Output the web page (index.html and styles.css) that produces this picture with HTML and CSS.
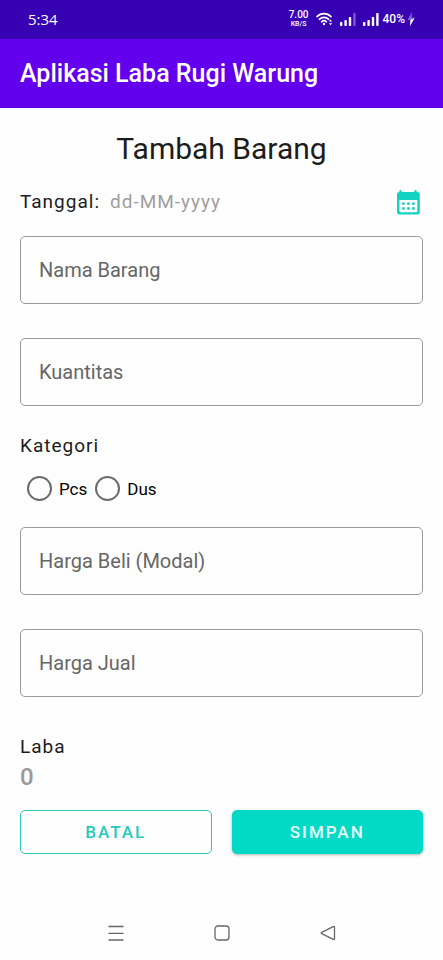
FILE: index.html
```html
<!DOCTYPE html>
<html lang="id">
<head>
<meta charset="utf-8">
<meta name="viewport" content="width=device-width, initial-scale=1">
<title>Aplikasi Laba Rugi Warung</title>
<link rel="stylesheet" href="styles.css">
</head>
<body>
<div class="status-bar">
  <span class="clock">5:34</span>
  <div class="status-icons">
    <div class="net-speed"><span class="net-value">7.00</span><span class="net-unit">KB/S</span></div>
    <svg width="17" height="14" viewBox="0 0 17 14" fill="none" stroke="#fff" stroke-width="1.6" stroke-linecap="round" aria-hidden="true">
      <path d="M1 4.6C5 .6 11 .6 15 4.6M3.3 7.3c2.7-2.6 6.7-2.6 9.4 0M5.6 9.8c1.4-1.3 3.4-1.3 4.8 0"/>
      <circle cx="8" cy="12" r="1.2" fill="#fff" stroke="none"/>
      <path d="M12.8 9.6l1.7-2 1.7 2zM12.8 11.2h3.4l-1.7 2z" fill="#fff" stroke="none"/>
    </svg>
    <svg width="16" height="13" viewBox="0 0 16 13" fill="#fff" aria-hidden="true">
      <rect x="0" y="9" width="2.4" height="4" rx=".8"/><rect x="4.4" y="7" width="2.4" height="6" rx=".8"/><rect x="8.8" y="4" width="2.4" height="9" rx=".8"/><rect x="13.2" y="0" width="2.4" height="13" rx=".8" opacity=".35"/>
    </svg>
    <svg width="16" height="13" viewBox="0 0 16 13" fill="#fff" aria-hidden="true">
      <rect x="0" y="9" width="2.4" height="4" rx=".8"/><rect x="4.4" y="7" width="2.4" height="6" rx=".8"/><rect x="8.8" y="4" width="2.4" height="9" rx=".8"/><rect x="13.2" y="0" width="2.4" height="13" rx=".8"/>
    </svg>
    <div class="battery">
      <span>40%</span>
      <svg width="8" height="14" viewBox="0 0 8 14" aria-hidden="true">
        <path d="M5 0L.5 8H3.5L3 14 7.5 5.6H4.5z" fill="#fff" opacity=".4"/>
        <path d="M3.500 8L3 14 7.500 6.200z" fill="#fff"/>
      </svg>
    </div>
  </div>
</div>
<header class="app-bar"><h1>Aplikasi Laba Rugi Warung</h1></header>
<main>
  <form class="item-form">
    <h2>Tambah Barang</h2>
    <div class="date-row">
      <label class="label" for="tanggal">Tanggal:</label>
      <input class="date-input" id="tanggal" type="text" placeholder="dd-MM-yyyy">
      <button class="calendar-button" type="button" aria-label="Pilih tanggal">
        <svg width="30" height="30" viewBox="0 0 30 30" aria-hidden="true">
          <path fill="#12d3c2" fill-rule="evenodd" d="M7.5 3a1.2 1.2 0 0 1 1.2 1.2V5h12.600v-.8a1.200 1.200 0 0 1 2.400 0V5h.8a2.300 2.300 0 0 1 2.300 2.300v18a2.300 2.300 0 0 1-2.300 2.300h-18.200A2.300 2.300 0 0 1 4 25.300v-18A2.300 2.300 0 0 1 6.300 5V4.200A1.200 1.200 0 0 1 7.500 3zM6.500 13v11.200a1 1 0 0 0 1 1h15.800a1 1 0 0 0 1-1V13z"/>
          <g fill="#12d3c2"><circle cx="10.400" cy="16.700" r="1.400"/><circle cx="15.400" cy="16.700" r="1.400"/><circle cx="20.400" cy="16.700" r="1.400"/><circle cx="10.400" cy="21.500" r="1.400"/><circle cx="15.400" cy="21.500" r="1.400"/><circle cx="20.400" cy="21.500" r="1.400"/></g>
        </svg>
      </button>
    </div>
    <div class="fields">
      <input class="field" type="text" placeholder="Nama Barang" aria-label="Nama Barang">
      <input class="field" type="text" inputmode="numeric" placeholder="Kuantitas" aria-label="Kuantitas">
    </div>
    <fieldset class="category">
      <legend class="label">Kategori</legend>
      <div class="options">
        <label class="option"><input type="radio" name="kategori" value="pcs">Pcs</label>
        <label class="option"><input type="radio" name="kategori" value="dus">Dus</label>
      </div>
    </fieldset>
    <div class="fields">
      <input class="field" type="text" inputmode="numeric" placeholder="Harga Beli (Modal)" aria-label="Harga Beli (Modal)">
      <input class="field" type="text" inputmode="numeric" placeholder="Harga Jual" aria-label="Harga Jual">
    </div>
    <div class="profit">
      <span class="label">Laba</span>
      <output class="profit-value">0</output>
    </div>
    <div class="actions">
      <button class="button outlined" type="button">BATAL</button>
      <button class="button filled" type="submit">SIMPAN</button>
    </div>
  </form>
</main>
<nav class="system-nav" aria-label="Navigasi sistem">
  <button type="button" aria-label="Menu"><svg width="18" height="18" viewBox="0 0 18 18" fill="none" stroke="#666" stroke-width="1.300" aria-hidden="true"><path d="M1.500 2.500h15M1.500 9.300h15M1.500 16h15"/></svg></button>
  <button type="button" aria-label="Beranda"><svg width="18" height="18" viewBox="0 0 18 18" fill="none" stroke="#666" stroke-width="1.300" aria-hidden="true"><rect x="2" y="2" width="14" height="14" rx="3"/></svg></button>
  <button type="button" aria-label="Kembali"><svg width="18" height="18" viewBox="0 0 18 18" fill="none" stroke="#666" stroke-width="1.300" stroke-linejoin="round" aria-hidden="true"><path d="M14.300 2.600L2.700 8.400q-1 .6 0 1.200l11.600 5.800q1.200.4 1.200-.8V3.400q0-1.200-1.200-.8z"/></svg></button>
</nav>
</body>
</html>
```

FILE: styles.css
```css
* { box-sizing: border-box; }

body {
  margin: 0;
  min-height: 100vh;
  display: flex;
  flex-direction: column;
  background: #fefefe;
  color: #1c1c1c;
  font-family: Roboto, "Liberation Sans", sans-serif;
  font-size: 20px;
  line-height: 24px;
}

h1, h2 { margin: 0; }
svg { display: block; }
button, input { font: inherit; }

.status-bar {
  display: flex;
  align-items: center;
  justify-content: space-between;
  padding: 7px 28px 8px;
  background: #3700b3;
  color: #fff;
}

.clock {
  font-family: "Open Sans", sans-serif;
  font-size: 15px;
}

.status-icons {
  display: flex;
  align-items: center;
  gap: 7px;
}

.net-speed {
  display: flex;
  flex-direction: column;
  align-items: center;
  font-weight: 500;
}

.net-value { font-size: 10px; line-height: 10px; }
.net-unit { font-size: 7px; line-height: 8px; }

.battery {
  display: flex;
  align-items: center;
  gap: 2px;
  margin-left: -3px;
  font-size: 12px;
  font-weight: 500;
}

.app-bar {
  padding: 21px 20px 20px;
  background: #6200ee;
  color: #fff;
}

.app-bar h1 {
  font-size: 25px;
  line-height: 28px;
  font-weight: 500;
}

main {
  flex: 1;
  padding: 23px 20px;
}

.item-form h2 {
  margin-bottom: 20px;
  font-size: 30px;
  line-height: 36px;
  font-weight: 400;
  text-align: center;
}

.label,
.date-input {
  font-size: 19px;
  letter-spacing: 1px;
}

.date-row {
  display: flex;
  align-items: center;
  gap: 10px;
  margin-bottom: 19px;
}

.date-input {
  flex: 1;
  min-width: 0;
  padding: 0;
  border: 0;
  background: none;
}

.date-input::placeholder {
  color: #9e9e9e;
  opacity: 1;
}

.calendar-button {
  padding: 0;
  border: 0;
  background: none;
}

.fields {
  display: grid;
  gap: 34px;
}

.field {
  width: 100%;
  padding: 21px 18px;
  border: 1px solid #9a9a9a;
  border-radius: 5px;
  background: none;
}

.field::placeholder {
  color: #666;
  opacity: 1;
}

.field { height: 68px; }

.category {
  margin: 28px 0 20px;
  padding: 0;
  border: 0;
}

.category legend { padding: 0; }

.options {
  display: flex;
  gap: 8px;
  padding: 18px 7px 6px;
}

.option {
  display: flex;
  align-items: center;
  gap: 7px;
  color: #000;
  font-size: 17px;
}

.option input {
  appearance: none;
  width: 25px;
  height: 25px;
  margin: 0;
  border: 2px solid #6b6b6b;
  border-radius: 50%;
}

.option input:checked {
  background: radial-gradient(#03dac5 0 6px, transparent 7px);
  border-color: #03dac5;
}

.profit {
  display: flex;
  flex-direction: column;
  gap: 3px;
  margin: 38px 0 18px;
}

.profit-value {
  color: #999;
  font-size: 24px;
  line-height: 30px;
  font-weight: 500;
}

.actions {
  display: grid;
  grid-template-columns: 1fr 1fr;
  gap: 20px;
}

.button {
  padding: 9px 19px;
  border: 1px solid #2cc6b9;
  border-radius: 5px;
  font-size: 17px;
  font-weight: 500;
  letter-spacing: 2px;
}

.outlined {
  background: none;
  color: #24cabb;
}

.filled {
  border-color: #03dac5;
  background: #03dac5;
  color: #e9fffc;
  box-shadow: 0 1px 3px rgba(0, 0, 0, 0.3);
}

.system-nav {
  display: flex;
  justify-content: center;
  gap: 88px;
  padding: 18px 20px;
}

.system-nav button {
  padding: 0;
  border: 0;
  background: none;
}
```
